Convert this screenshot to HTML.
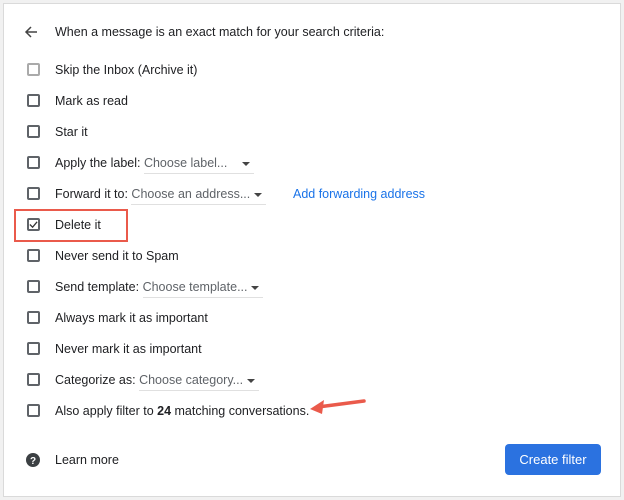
<!DOCTYPE html>
<html><head><style>
body{margin:0;width:624px;height:500px;background:#f1f1f1;position:relative;overflow:hidden;font-family:"Liberation Sans",Arial,sans-serif;font-size:12.5px;color:#202124}
.dlg{position:absolute;left:3px;top:3px;width:616px;height:492px;background:#fff;border:1px solid #dadada}
.row{position:absolute;left:0;height:20px;line-height:20px;white-space:nowrap}
.cb{position:absolute;left:23px;top:3px;width:9px;height:9px;border:2px solid #5f6368;border-radius:2px}
.t{position:absolute;left:51px;top:0}
.dd{display:inline-block;border-bottom:1px solid #e0e0e0;color:#5f6368;padding-right:16px;position:relative;line-height:19px}
.dd:after{content:"";position:absolute;right:4px;top:8px;border:4px solid transparent;border-top:4px solid #444;border-bottom:0}
</style></head><body>
<div class="dlg">
<svg style="position:absolute;left:20px;top:21px" width="14" height="14" viewBox="0 0 14 14"><path d="M13 7H2M7 2L2 7l5 5" stroke="#444" stroke-width="1.5" fill="none"/></svg>
<div class="row" style="top:18px;left:51px">When a message is an exact match for your search criteria:</div>

<div class="row" style="top:56px"><span class="cb" style="border-color:#aaa"></span><span class="t">Skip the Inbox (Archive it)</span></div>
<div class="row" style="top:87px"><span class="cb"></span><span class="t">Mark as read</span></div>
<div class="row" style="top:118px"><span class="cb"></span><span class="t">Star it</span></div>
<div class="row" style="top:149px"><span class="cb"></span><span class="t">Apply the label: <span class="dd">Choose label...&nbsp;&nbsp;&nbsp;</span></span></div>
<div class="row" style="top:180px;width:616px"><span class="cb"></span><span class="t">Forward it to: <span class="dd">Choose an address...</span></span><span style="position:absolute;left:289px;color:#1a73e8">Add forwarding address</span></div>
<div class="row" style="top:211px"><span class="cb"></span><svg style="position:absolute;left:25px;top:5px" width="9" height="9" viewBox="0 0 10 10"><path d="M1 5l3 3 5-6" stroke="#333" stroke-width="1.4" fill="none"/></svg><span class="t">Delete it</span></div>
<div class="row" style="top:242px"><span class="cb"></span><span class="t">Never send it to Spam</span></div>
<div class="row" style="top:273px"><span class="cb"></span><span class="t">Send template: <span class="dd">Choose template...</span></span></div>
<div class="row" style="top:304px"><span class="cb"></span><span class="t">Always mark it as important</span></div>
<div class="row" style="top:335px"><span class="cb"></span><span class="t">Never mark it as important</span></div>
<div class="row" style="top:366px"><span class="cb"></span><span class="t">Categorize as: <span class="dd">Choose category...</span></span></div>
<div class="row" style="top:397px"><span class="cb"></span><span class="t">Also apply filter to <b>24</b> matching conversations.</span></div>

<div style="position:absolute;left:10px;top:205px;width:110px;height:29px;border:2px solid #ea5a4b"></div>
<svg style="position:absolute;left:300px;top:390px" width="70" height="24" viewBox="0 0 70 24"><path d="M60 7L14 13" stroke="#ea5a4b" stroke-width="3.5" stroke-linecap="round"/><path d="M6 15L20 6 18 20Z" fill="#ea5a4b"/></svg>

<svg style="position:absolute;left:22px;top:449px" width="14" height="14" viewBox="0 0 14 14"><circle cx="7" cy="7" r="7" fill="#3c4043"/><text x="7" y="11" font-size="10" font-weight="bold" fill="#fff" text-anchor="middle" font-family="Liberation Sans">?</text></svg>
<div class="row" style="top:446px;left:51px">Learn more</div>
<div style="position:absolute;left:501px;top:440px;width:96px;height:31px;background:#2b72e0;border-radius:4px;color:#fff;line-height:31px;text-align:center;font-size:13px">Create filter</div>
</div>
</body></html>
